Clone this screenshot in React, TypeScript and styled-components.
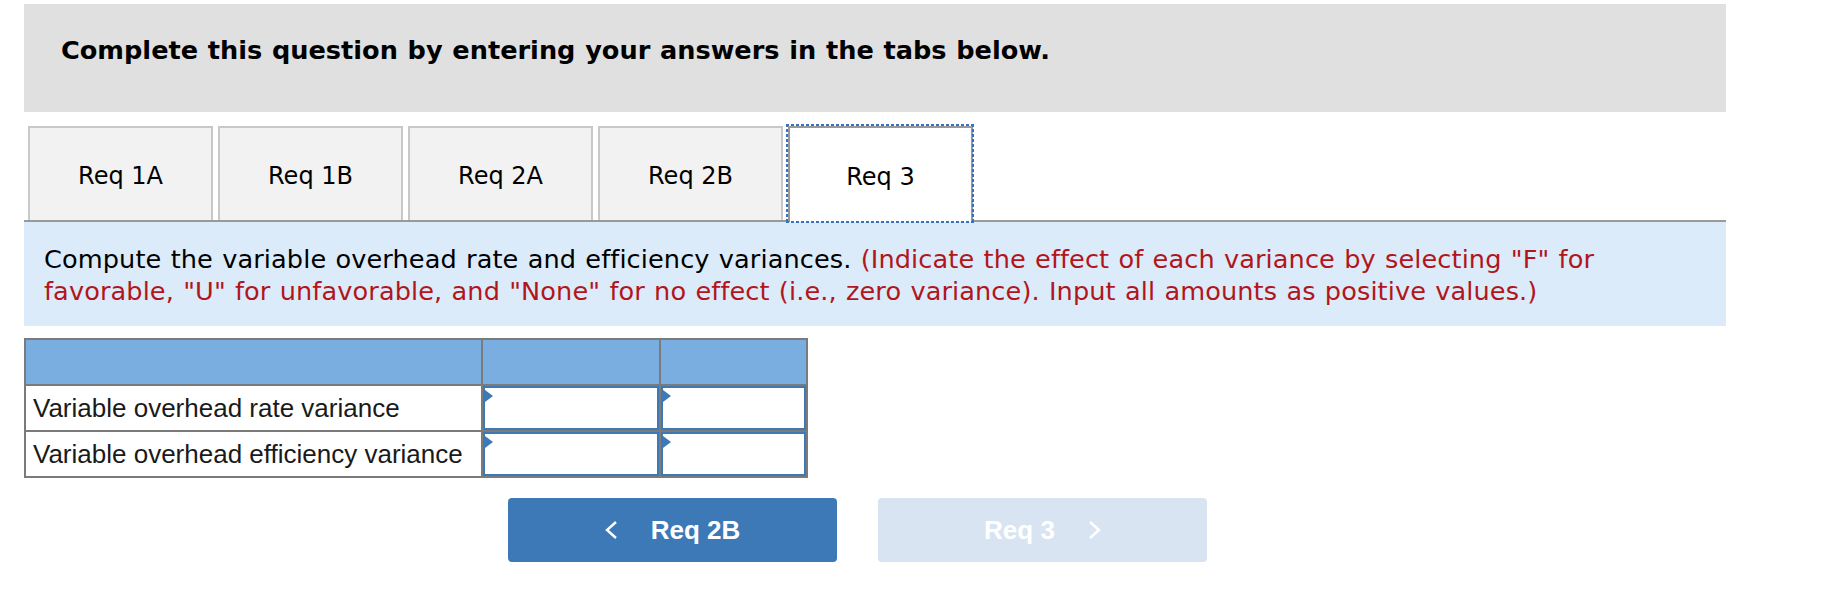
import styled, { createGlobalStyle } from 'styled-components';

const GlobalStyle = createGlobalStyle`
    body {
        margin: 0;
        background: #fff;
    }
`;

const Page = styled.div`
    width: 1702px;
    padding: 4px 0 0 24px;
`;

const Banner = styled.div`
    height: 108px;
    box-sizing: border-box;
    padding: 31px 0 0 37px;
    background-color: #e0e0e0;
`;

const Heading = styled.h2`
    margin: 0;
    font: bold 25.6px/30px 'DejaVu Sans', Verdana, sans-serif;
    word-spacing: 0.8px;
    color: #000;
`;

const TabBar = styled.div`
    display: flex;
    gap: 5px;
    padding: 14px 0 0 4px;
    border-bottom: 2px solid #999;
`;

// dotted focus ring, drawn as dashes so it reads like the browser's
const dots = (dir: string) =>
    `repeating-linear-gradient(${dir}, #3672c0 0 3px, transparent 3px 5px)`;

const Tab = styled.div<{ $active?: boolean }>`
    position: relative;
    display: flex;
    align-items: center;
    justify-content: center;
    width: 185px;
    height: ${p => (p.$active ? '96px' : '94px')};
    margin-bottom: ${p => (p.$active ? '-2px' : '0')};
    padding-top: 3px;
    box-sizing: border-box;
    border: 2px solid ${p => (p.$active ? '#999' : '#c8c8c8')};
    border-bottom: none;
    background-color: ${p => (p.$active ? '#fff' : '#f2f2f2')};
    font: 24px 'DejaVu Sans', Verdana, sans-serif;
    color: #000;

    ${p =>
        p.$active &&
        `
        &::after {
            content: '';
            position: absolute;
            left: -4px;
            top: -4px;
            right: -3px;
            bottom: -1px;
            background:
                ${dots('90deg')} top / 100% 2px no-repeat,
                ${dots('90deg')} bottom / 100% 2px no-repeat,
                ${dots('180deg')} left / 2px 100% no-repeat,
                ${dots('180deg')} right / 2px 100% no-repeat;
        }
    `}
`;

const Prompt = styled.div`
    padding: 22px 20px 19px;
    background-color: #dcebf9;
    font: 25.6px/31.5px 'DejaVu Sans', Verdana, sans-serif;
    letter-spacing: 0.1px;
    word-spacing: 1px;
    color: #000;
`;

const Note = styled.span`
    color: #b1161c;
`;

const Grid = styled.div`
    display: grid;
    grid-template-columns: 455px 176px 145px;
    grid-auto-rows: 44px;
    gap: 2px;
    width: max-content;
    margin-top: 12px;
    padding: 2px;
    background-color: #7b7b7b;
`;

const HeadCell = styled.div`
    background-color: #7aade0;
`;

const LabelCell = styled.div`
    display: flex;
    align-items: center;
    padding-left: 7px;
    background-color: #fff;
    font: 26px 'Liberation Sans', Arial, sans-serif;
    color: #1a1a1a;
    white-space: nowrap;
`;

const InputCell = styled.div`
    position: relative;
    box-sizing: border-box;
    border: 2px solid #3d78b7;
    background-color: #fff;

    &::before {
        content: '';
        position: absolute;
        left: 0;
        top: 2px;
        border-style: solid;
        border-width: 6px 0 6px 8px;
        border-color: transparent transparent transparent #3d78b7;
    }
`;

const NavRow = styled.div`
    display: flex;
    gap: 41px;
    margin-top: 20px;
    padding-left: 484px;
`;

const NavButton = styled.button<{ $disabled?: boolean }>`
    display: flex;
    align-items: center;
    justify-content: center;
    gap: 34px;
    width: 329px;
    height: 64px;
    padding: 0;
    border: none;
    border-radius: 4px;
    background-color: ${p => (p.$disabled ? '#d8e4f2' : '#3d78b7')};
    color: #fff;
    font: bold 26px 'Liberation Sans', Arial, sans-serif;
    cursor: ${p => (p.$disabled ? 'default' : 'pointer')};
`;

const Chevron = ({ dir }: { dir: 'left' | 'right' }) => (
    <svg width="12" height="18" viewBox="0 0 12 18" fill="none">
        <polyline
            points={dir === 'left' ? '11,1 2,9 11,17' : '1,1 10,9 1,17'}
            stroke="#fff"
            strokeWidth="2.4"
            strokeLinejoin="miter"
        />
    </svg>
);

const tabs = ['Req 1A', 'Req 1B', 'Req 2A', 'Req 2B', 'Req 3'];
const rows = ['Variable overhead rate variance', 'Variable overhead efficiency variance'];

export default function App() {
    return (
        <>
            <GlobalStyle />
            <Page>
                <Banner>
                    <Heading>Complete this question by entering your answers in the tabs below.</Heading>
                </Banner>
                <TabBar>
                    {tabs.map(t => (
                        <Tab key={t} $active={t === 'Req 3'}>
                            {t}
                        </Tab>
                    ))}
                </TabBar>
                <Prompt>
                    Compute the variable overhead rate and efficiency variances.{' '}
                    <Note>
                        (Indicate the effect of each variance by selecting "F" for
                        <br />
                        favorable, "U" for unfavorable, and "None" for no effect (i.e., zero variance). Input all
                        amounts as positive values.)
                    </Note>
                </Prompt>
                <Grid>
                    <HeadCell />
                    <HeadCell />
                    <HeadCell />
                    {rows.map(r => [
                        <LabelCell key={r}>{r}</LabelCell>,
                        <InputCell key={r + '-a'} />,
                        <InputCell key={r + '-b'} />
                    ])}
                </Grid>
                <NavRow>
                    <NavButton>
                        <Chevron dir="left" />
                        Req 2B
                    </NavButton>
                    <NavButton $disabled>
                        Req 3
                        <Chevron dir="right" />
                    </NavButton>
                </NavRow>
            </Page>
        </>
    );
}
